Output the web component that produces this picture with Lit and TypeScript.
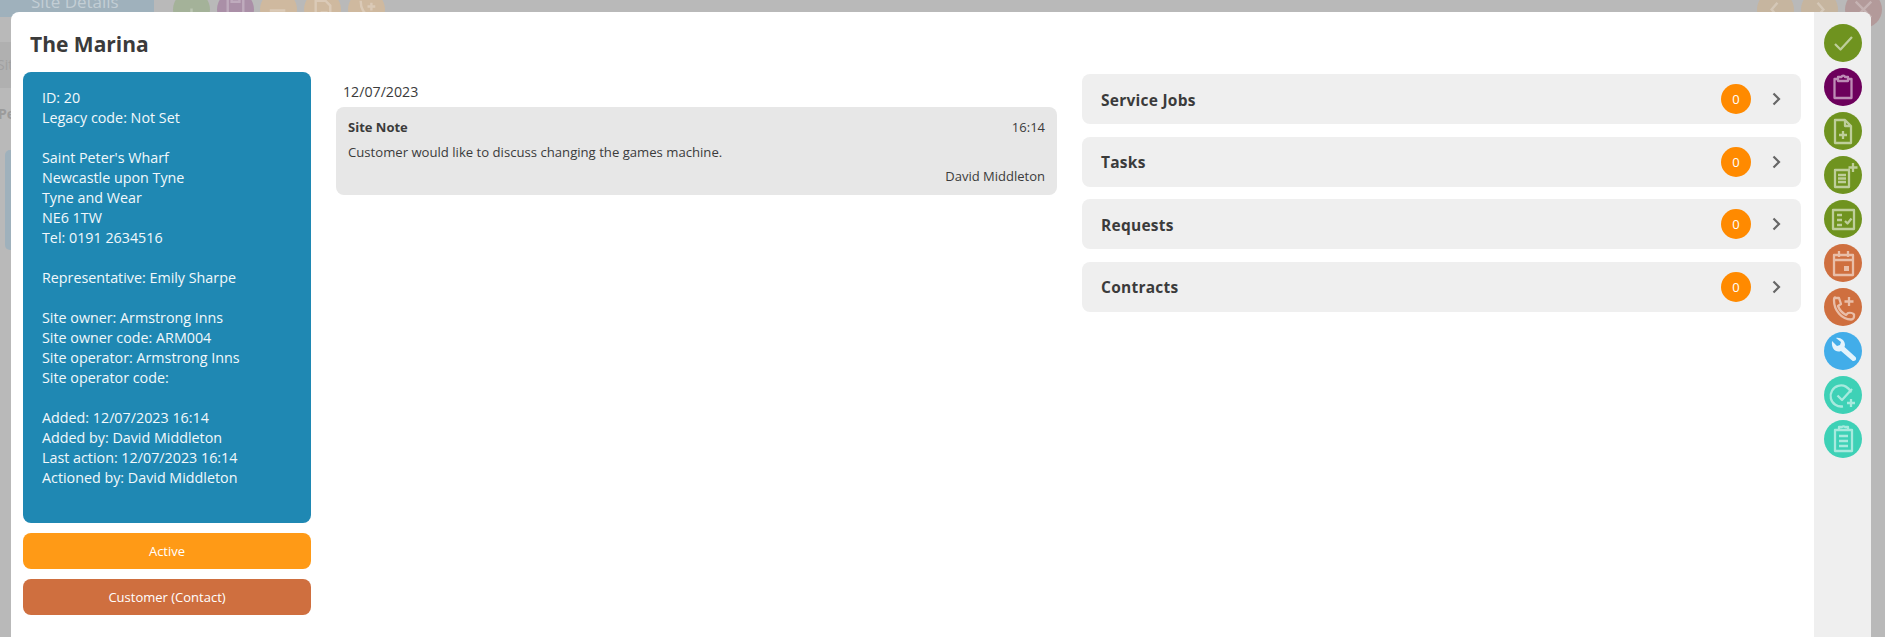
import { LitElement, html, css, svg } from "lit";
import { customElement } from "lit/decorators.js";

const ICONS: Record<string, unknown> = {
  check: svg`<path d="M11 20l5.500 5.500L28 13"/>`,
  clip: svg`<path d="M14 11h-3.500v19h17V11H24M14 9h3.500a1.800 1.800 0 0 1 3.500 0H24v4H14z"/>`,
  filePlus: svg`<path d="M11 8h10l6 6v17H11zM21 8v6h6M15 23h8M19 19v8"/>`,
  notePlus: svg`<path d="M11 14h14v17H11zM14 19h8M14 22.500h8M14 26h8M29 7v9M24.500 11.500h9"/>`,
  checklist: svg`<path d="M9 10h21v19H9zM13 15h5M13 20h5M13 25h5M21 21l2.500 2.500 4-5"/>`,
  calendar: svg`<path d="M10 11h19v20H10zM10 16h19M15 7v6M24 7v6"/><path class="f" d="M20 22h5v5h-5z"/>`,
  phonePlus: svg`<path d="M11 10h4l2 6-3 2c1.500 4 4 7 8 9l2-2c2-.5 5 0 6 1.500v2c0 2-2 3-3 3-9 0-17-9-17-19 0-2 .5-3 1-3zM25 9v9M20.500 13.500h9"/>`,
  wrench: svg`<path class="f" d="M8 9l5 5 3-1 1-3-5-4c4-1 9 2 9 7l-.5 2 11 10c1 1 1 4-2 4-1 0-1.500-.5-2-1L17 19c-5 2-10-2-9-10z"/>`,
  circlePlus: svg`<path d="M28 13L18 24l-4.500-4.500M27 16.500a10.500 10.500 0 1 0-8 13.800M27 23v8M23 27h8"/>`,
  noteList: svg`<path d="M11 10h17v21H11zM15 10V7h3a2 2 0 0 1 3 0h3v3zM15 16h9M15 21h9M15 26h9"/>`,
};

const SIDE_BUTTONS = [
  ["#6f931f", "check"],
  ["#6d005c", "clip"],
  ["#6f931f", "filePlus"],
  ["#6f931f", "notePlus"],
  ["#6f931f", "checklist"],
  ["#cf6f3f", "calendar"],
  ["#cf6f3f", "phonePlus"],
  ["#42ade9", "wrench"],
  ["#3ed1b6", "circlePlus"],
  ["#3ed1b6", "noteList"],
];

const GHOSTS: [number, string, unknown][] = [
  [173, "#a4b299", svg`<path d="M19 18v20M9 28h20"/>`],
  [217, "#aa8fa7", svg`<path d="M11 4h16v22H11zM15 4v7h8V4"/>`],
  [260, "#cfb99f", svg`<path d="M10 20h16M10 26h12"/>`],
  [304, "#cfb99f", svg`<path d="M12 10h10l5 5v14H12zM17 22h6v7"/>`],
  [348, "#cfb99f", svg`<path d="M13 10c0 8 4 14 10 17M24 12v8M20 16h8"/>`],
  [1757, "#c6b59f", svg`<path d="M21 12l-6 7 6 7"/>`],
  [1801, "#c6b59f", svg`<path d="M17 12l6 7-6 7"/>`],
  [1845, "#b39a9a", svg`<path d="M11 11l16 16M27 11L11 27"/>`],
];

const INFO = [
  ["ID: 20", "Legacy code: Not Set"],
  ["Saint Peter's Wharf", "Newcastle upon Tyne", "Tyne and Wear", "NE6 1TW", "Tel: 0191 2634516"],
  ["Representative: Emily Sharpe"],
  ["Site owner: Armstrong Inns", "Site owner code: ARM004", "Site operator: Armstrong Inns", "Site operator code:"],
  ["Added: 12/07/2023 16:14", "Added by: David Middleton", "Last action: 12/07/2023 16:14", "Actioned by: David Middleton"],
];

const ROWS = ["Service Jobs", "Tasks", "Requests", "Contracts"];

@customElement("app-root")
export class AppRoot extends LitElement {
  static styles = css`
    :host {
      display: block;
      position: relative;
      width: 1885px;
      height: 637px;
      overflow: hidden;
      background: #b9b9b9;
      font-family: "Open Sans", "Noto Sans", sans-serif;
      color: #3b3b3b;
      font-size: 13px;
    }
    .under { position: absolute; }
    .tile { left: 0; top: -20px; width: 154px; height: 37px; background: #9fb1bc; color: #c3ced5; font-size: 17px; line-height: 24px; padding: 0 0 3px 31px; box-sizing: border-box; display: flex; align-items: flex-end; border-radius: 0 0 4px 0; }
    .ghost-c { width: 37px; height: 37px; border-radius: 50%; top: -9px; }
    .ghost-c svg { width: 100%; height: 100%; fill: none; stroke: rgba(255,255,255,.25); stroke-width: 2.500; display: block; }
    .strip-band { left: 0; top: 42px; width: 11px; height: 46px; background: #b0b0b0; color: #a0a0a0; font-size: 14px; line-height: 46px; white-space: nowrap; overflow: hidden; text-indent: -3px; }
    .strip-label { left: 0; top: 104px; width: 11px; color: #9b9b9b; font-size: 14px; font-weight: 700; line-height: 20px; overflow: hidden; text-indent: -2px; }
    .strip-card { left: 5px; top: 150px; width: 6px; height: 100px; background: #9fb1bc; border-radius: 5px 0 0 5px; }
    .modal {
      position: absolute;
      left: 11px;
      top: 12px;
      width: 1860px;
      height: 640px;
      background: #fff;
      border-radius: 8px;
      display: flex;
      overflow: hidden;
    }
    .main { flex: 1; min-width: 0; display: flex; flex-direction: column; padding: 0 13px 0 12px; }
    h1 { margin: 18px 0 0 7px; font-size: 21px; line-height: 28px; font-weight: 700; color: #3b3b3b; height: 42px; }
    .cols { display: flex; gap: 25px; }
    .left { width: 288px; flex: none; display: flex; flex-direction: column; gap: 10px; }
    .info { height: 451px; box-sizing: border-box; background: #1f88b3; border-radius: 8px; color: #f2f8fb; padding: 16px 19px; line-height: 20px; font-size: 14.300px; }
    .gap { height: 20px; }
    .pill { height: 36px; border-radius: 8px; color: #fff; display: flex; align-items: center; justify-content: center; font-size: 13px; }
    .active { background: #ff9a16; }
    .type { background: #cf6f3f; }
    .center { width: 721px; flex: none; }
    .date { font-size: 14.200px; line-height: 20px; padding: 10px 0 0 7px; height: 35px; box-sizing: border-box; }
    .note { height: 88px; box-sizing: border-box; background: #e7e7e7; border-radius: 8px; padding: 11px 12px; display: flex; flex-direction: column; }
    .note-head { display: flex; justify-content: space-between; line-height: 18px; font-size: 13px; }
    .note-head b { font-weight: 700; }
    .note-body { margin-top: 7px; line-height: 18px; font-size: 13.130px; }
    .note-by { margin-top: 6px; text-align: right; line-height: 18px; }
    .right { flex: 1; padding-top: 2px; display: flex; flex-direction: column; gap: 12.500px; }
    .row { height: 50px; background: #efefef; border-radius: 8px; display: flex; align-items: center; padding: 0 18px 0 19px; font-size: 15.500px; letter-spacing: .25px; font-weight: 700; }
    .row span { flex: 1; padding-top: 1px; }
    .badge { width: 30px; height: 30px; border-radius: 50%; background: #ff8a00; color: #fff; font-size: 13px; font-weight: 400; letter-spacing: 0; display: flex; align-items: center; justify-content: center; }
    .chev { width: 12px; height: 16px; margin-left: 19px; margin-right: 1px; fill: none; stroke: #666; stroke-width: 2.200; }
    .side { width: 57px; flex: none; background: #efefef; display: flex; flex-direction: column; align-items: center; gap: 6.000px; padding: 12px 0 0 0; box-sizing: border-box; }
    .circle { width: 38px; height: 38px; border-radius: 50%; flex: none; display: flex; }
    .circle svg { width: 100%; height: 100%; fill: none; stroke: rgba(255,255,255,.55); stroke-width: 2.300; stroke-linejoin: round; }
    .circle svg .f { fill: rgba(255,255,255,.55); stroke: none; }
    .circle.wr svg .f { fill: rgba(255,255,255,.85); }
  `;

  render() {
    return html`
      <div class="under tile">Site Details</div>
      ${GHOSTS.map(
        ([x, c, p]) => html`<div class="under ghost-c" style="left:${x}px;background:${c}"><svg viewBox="0 0 38 38">${p}</svg></div>`
      )}
      <div class="under strip-band">Sit</div>
      <div class="under strip-label">Pe</div>
      <div class="under strip-card"></div>
      <div class="modal">
        <div class="main">
          <h1>The Marina</h1>
          <div class="cols">
            <div class="left">
              <div class="info">
                ${INFO.map(
                  (g, i) => html`${i ? html`<div class="gap"></div>` : ""}${g.map((l) => html`<div>${l}</div>`)}`
                )}
              </div>
              <div class="pill active">Active</div>
              <div class="pill type">Customer (Contact)</div>
            </div>
            <div class="center">
              <div class="date">12/07/2023</div>
              <div class="note">
                <div class="note-head"><b>Site Note</b><span>16:14</span></div>
                <div class="note-body">Customer would like to discuss changing the games machine.</div>
                <div class="note-by">David Middleton</div>
              </div>
            </div>
            <div class="right">
              ${ROWS.map(
                (r) => html`<div class="row"><span>${r}</span><div class="badge">0</div>
                  <svg class="chev" viewBox="0 0 12 16"><path d="M3.500 2.500L9 8l-5.500 5.500"/></svg></div>`
              )}
            </div>
          </div>
        </div>
        <div class="side">
          ${SIDE_BUTTONS.map(
            ([c, n]) => html`<div class="circle ${n === "wrench" ? "wr" : ""}" style="background:${c}">
              <svg viewBox="0 0 38 38">${ICONS[n]}</svg></div>`
          )}
        </div>
      </div>
    `;
  }
}
